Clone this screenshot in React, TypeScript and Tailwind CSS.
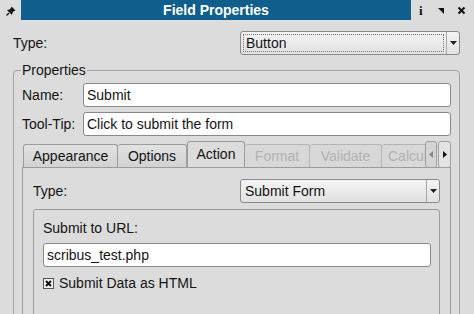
export default function App() {
  return (
    <div className="w-[474px] h-[314px] overflow-hidden bg-[#dcdcdc] text-[14px] text-[#141414] font-['Liberation_Sans',Arial,sans-serif] leading-[16px]">
      {/* title bar */}
      <div className="flex h-[21px]">
        <div className="w-[21px] flex items-center justify-center">
          <svg width="10" height="10" viewBox="0 0 10 10">
            <path d="M5.5 0.5 L9.5 4.5 L8 5 L6.5 6.5 L6 9 L1 4 L3.5 3.5 L5 2 Z" fill="#111" />
            <path d="M3 7 L0.5 9.5" stroke="#111" strokeWidth="1.3" />
          </svg>
        </div>
        <div className="w-[390px] h-[20px] bg-[#0f5e8b] text-white font-bold text-center leading-[20px]">
          Field Properties
        </div>
        <div className="flex-1 flex items-center pl-[8px] text-[#111]">
          <span className="w-[4px] font-['Liberation_Serif',serif] font-bold text-[13px]">i</span>
          <svg className="ml-[14px]" width="8" height="8" viewBox="0 0 8 8">
            <path d="M1 1 L7 1 L7 7 Z" fill="#111" />
          </svg>
          <svg className="ml-[12px]" width="9" height="9" viewBox="0 0 9 9">
            <path d="M1.5 1.5 L7.5 7.5 M7.5 1.5 L1.5 7.5" stroke="#111" strokeWidth="2" />
          </svg>
        </div>
      </div>

      {/* Type row */}
      <div className="mt-[10px] flex items-center pl-[13px] pr-[14px]">
        <span className="flex-1">Type:</span>
        <div className="w-[220px] h-[24px] flex rounded-[3px] border border-[#8a8a8a] bg-gradient-to-b from-[#f4f4f4] to-[#e2e2e2]">
          <div className="flex-1 m-[2px] border border-dotted border-[#777] flex items-center pl-[2px]">
            Button
          </div>
          <div className="w-[13px] border-l border-[#a8a8a8] flex items-center justify-center">
            <svg width="7" height="4" viewBox="0 0 7 4">
              <path d="M0 0 L7 0 L3.5 4 Z" fill="#222" />
            </svg>
          </div>
        </div>
      </div>

      {/* Properties group */}
      <fieldset className="mt-[7px] ml-[13px] w-[447px] h-[300px] border border-[#a2a2a2] rounded-[4px]">
        <legend className="ml-[7px] px-[1px]">Properties</legend>
        <div className="pt-[5px] pl-[8px] pr-[8px] flex flex-col gap-[5px]">
          <div className="flex items-center h-[24px]">
            <span className="w-[61px]">Name:</span>
            <div className="flex-1 h-[24px] rounded-[3px] border border-[#8a8a8a] bg-white flex items-center pl-[3px]">
              Submit
            </div>
          </div>
          <div className="flex items-center h-[24px]">
            <span className="w-[61px]">Tool-Tip:</span>
            <div className="flex-1 h-[24px] rounded-[3px] border border-[#8a8a8a] bg-white flex items-center pl-[3px]">
              Click to submit the form
            </div>
          </div>

          {/* tabs */}
          <div>
            <div className="flex items-end h-[26px]">
              <div className="flex items-end w-[403px] pl-[1px] overflow-hidden">
                <div className="shrink-0 w-[95px] h-[23px] border border-b-0 border-[#9c9c9c] rounded-t-[3px] bg-gradient-to-b from-[#e2e2e2] to-[#d2d2d2] flex items-center justify-center">
                  Appearance
                </div>
                <div className="shrink-0 w-[69px] h-[23px] border border-l-0 border-b-0 border-[#9c9c9c] rounded-t-[3px] bg-gradient-to-b from-[#e2e2e2] to-[#d2d2d2] flex items-center justify-center">
                  Options
                </div>
                <div className="shrink-0 relative z-10 -mb-[1px] w-[58px] h-[27px] border border-b-0 border-[#9c9c9c] rounded-t-[3px] bg-[#dcdcdc] flex items-center justify-center pb-[3px]">
                  Action
                </div>
                <div className="shrink-0 w-[65px] h-[23px] border border-l-0 border-b-0 border-[#b4b4b4] rounded-t-[3px] bg-[#d8d8d8] flex items-center justify-center text-[#b2b2b2]">
                  Format
                </div>
                <div className="shrink-0 w-[72px] h-[23px] border border-l-0 border-b-0 border-[#b4b4b4] rounded-t-[3px] bg-[#d8d8d8] flex items-center justify-center text-[#b2b2b2]">
                  Validate
                </div>
                <div className="shrink-0 w-[80px] h-[23px] border border-l-0 border-b-0 border-[#b4b4b4] rounded-t-[3px] bg-[#d8d8d8] flex items-center pl-[6px] text-[#b2b2b2]">
                  Calculate
                </div>
              </div>
              <div className="flex gap-[1px] h-[27px] -mb-[1px] relative z-10">
                <div className="w-[12px] border border-[#a0a0a0] rounded-[3px] bg-[#d4d4d4] flex items-center justify-center">
                  <svg width="4" height="7" viewBox="0 0 4 7">
                    <path d="M4 0 L4 7 L0 3.5 Z" fill="#888" />
                  </svg>
                </div>
                <div className="w-[13px] border border-[#a0a0a0] rounded-[3px] bg-[#e4e4e4] flex items-center justify-center">
                  <svg width="4" height="7" viewBox="0 0 4 7">
                    <path d="M0 0 L0 7 L4 3.5 Z" fill="#111" />
                  </svg>
                </div>
              </div>
            </div>

            {/* pane */}
            <div className="h-[200px] border border-[#9c9c9c] pt-[11px] pl-[10px] pr-[10px]">
              <div className="flex items-center">
                <span className="flex-1">Type:</span>
                <div className="w-[200px] h-[24px] flex rounded-[3px] border border-[#8a8a8a] bg-gradient-to-b from-[#f4f4f4] to-[#e2e2e2]">
                  <div className="flex-1 flex items-center pl-[4px]">Submit Form</div>
                  <div className="w-[13px] border-l border-[#a8a8a8] flex items-center justify-center">
                    <svg width="7" height="4" viewBox="0 0 7 4">
                      <path d="M0 0 L7 0 L3.5 4 Z" fill="#222" />
                    </svg>
                  </div>
                </div>
              </div>

              <div className="mt-[6px] h-[200px] border border-[#9c9c9c] rounded-[3px] pt-[10px] pl-[9px] pr-[8px]">
                <div>Submit to URL:</div>
                <div className="mt-[7px] h-[24px] rounded-[3px] border border-[#8a8a8a] bg-white flex items-center pl-[3px]">
                  scribus_test.php
                </div>
                <div className="mt-[8px] flex items-center gap-[5px]">
                  <div className="w-[11px] h-[11px] border border-[#555] bg-[#f2f2f2] flex items-center justify-center">
                    <svg width="7" height="7" viewBox="0 0 7 7">
                      <path d="M1 1 L6 6 M6 1 L1 6" stroke="#111" strokeWidth="2" />
                    </svg>
                  </div>
                  <span>Submit Data as HTML</span>
                </div>
              </div>
            </div>
          </div>
        </div>
      </fieldset>
    </div>
  );
}
